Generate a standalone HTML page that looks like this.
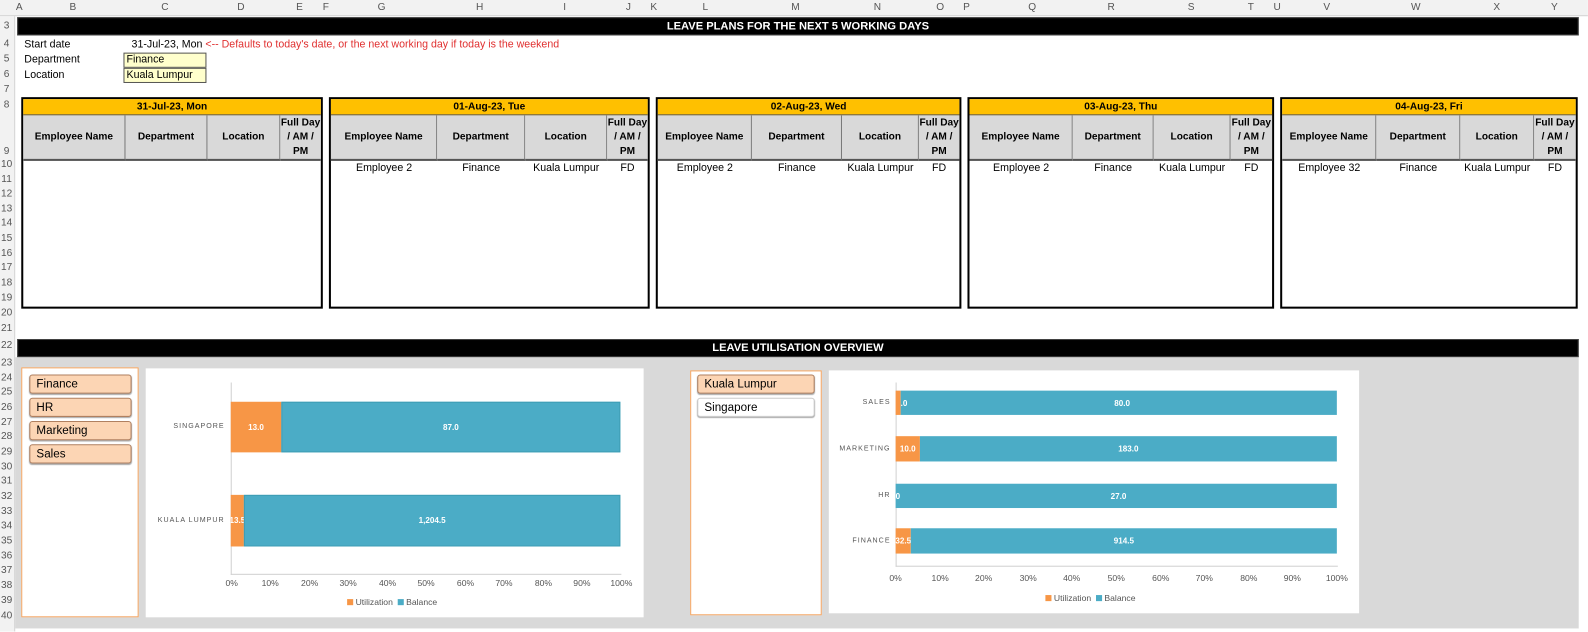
<!DOCTYPE html>
<html><head><meta charset="utf-8"><style>
*{box-sizing:border-box;margin:0;padding:0}
body{width:1588px;height:631px;overflow:hidden;background:#fff;font-family:"Liberation Sans",sans-serif;font-size:10.5px;color:#000}
#w{position:absolute;left:0;top:0;width:1569px;height:624px;transform:scale(1.012);transform-origin:0 0}
.a{position:absolute}
.colh{left:0;top:0;width:1569px;height:16px;background:#f2f2f2;border-bottom:1px solid #d4d4d4}
.colh span{position:absolute;top:2px;color:#555;font-size:10px;transform:translateX(-50%)}
.rowh{left:0;top:16px;width:15px;height:608px;background:#f2f2f2;border-right:1px solid #d4d4d4}
.rowh span{position:absolute;left:0;width:13px;text-align:center;color:#555;font-size:10px}
.bar{background:#000;color:#fff;font-weight:bold;text-align:center;font-size:11px;border:1px solid #444}
.tb{border:2px solid #000;background:#fff}
.yh{position:absolute;left:0;right:0;top:0;height:16px;background:#ffc000;border-bottom:1px solid #555;text-align:center;font-weight:bold;font-size:10px;line-height:15px}
.gh{position:absolute;top:16px;height:45px;background:#d9d9d9;border-right:1px solid #777;border-bottom:2px solid #555;font-weight:bold;font-size:10px;display:flex;align-items:center;justify-content:center;text-align:center;line-height:14px}
.dr{position:absolute;top:62px;text-align:center;font-size:10.5px}
.btn{position:absolute;height:19px;background:#fcd5b4;border:1px solid #b08060;border-radius:3px;font-size:11.5px;padding-left:6px;line-height:18px;box-shadow:0 1px 1px #aaa}
.tick{position:absolute;font-size:8.5px;color:#555;transform:translateX(-50%)}
.cat{position:absolute;font-size:7px;color:#555;letter-spacing:1px;text-align:right}
.v{position:absolute;color:#fff;font-size:8px;font-weight:bold;display:flex;align-items:center;justify-content:center;overflow:hidden}
</style></head><body><div id="w">
<div class="a colh">
<span style="left:19px">A</span><span style="left:72px">B</span><span style="left:163px">C</span><span style="left:238px">D</span><span style="left:296px">E</span><span style="left:322px">F</span><span style="left:377px">G</span><span style="left:474px">H</span><span style="left:558px">I</span><span style="left:621px">J</span><span style="left:646px">K</span><span style="left:697px">L</span><span style="left:786px">M</span><span style="left:867px">N</span><span style="left:929px">O</span><span style="left:955px">P</span><span style="left:1020px">Q</span><span style="left:1098px">R</span><span style="left:1177px">S</span><span style="left:1236px">T</span><span style="left:1262px">U</span><span style="left:1311px">V</span><span style="left:1399px">W</span><span style="left:1479px">X</span><span style="left:1536px">Y</span>
</div>
<div class="a rowh">
<span style="top:4px">3</span><span style="top:22px">4</span><span style="top:37px">5</span><span style="top:52px">6</span><span style="top:67px">7</span><span style="top:82px">8</span><span style="top:128px">9</span><span style="top:141px">10</span><span style="top:156px">11</span><span style="top:170px">12</span><span style="top:185px">13</span><span style="top:199px">14</span><span style="top:214px">15</span><span style="top:229px">16</span><span style="top:243px">17</span><span style="top:258px">18</span><span style="top:273px">19</span><span style="top:288px">20</span><span style="top:303px">21</span><span style="top:320px">22</span><span style="top:337px">23</span><span style="top:352px">24</span><span style="top:366px">25</span><span style="top:381px">26</span><span style="top:396px">27</span><span style="top:410px">28</span><span style="top:425px">29</span><span style="top:440px">30</span><span style="top:454px">31</span><span style="top:469px">32</span><span style="top:484px">33</span><span style="top:498px">34</span><span style="top:513px">35</span><span style="top:528px">36</span><span style="top:542px">37</span><span style="top:557px">38</span><span style="top:572px">39</span><span style="top:587px">40</span>
</div>
<div class="a bar" style="left:17px;top:17px;width:1543px;height:18px;line-height:16px">LEAVE PLANS FOR THE NEXT 5 WORKING DAYS</div>
<div class="a" style="left:24px;top:38px">Start date</div>
<div class="a" style="left:24px;top:53px">Department</div>
<div class="a" style="left:24px;top:68px">Location</div>
<div class="a" style="left:130px;top:38px">31-Jul-23, Mon <span style="color:#e03030">&lt;-- Defaults to today's date, or the next working day if today is the weekend</span></div>
<div class="a" style="left:122px;top:52px;width:82px;height:15px;background:#ffffcc;border:1px solid #555;padding-left:2px;line-height:13px">Finance</div>
<div class="a" style="left:122px;top:67px;width:82px;height:15px;background:#ffffcc;border:1px solid #555;padding-left:2px;line-height:13px">Kuala Lumpur</div>

<div class="a tb" style="left:21px;top:96px;width:298px;height:209px"><div class="yh">31-Jul-23, Mon</div>
<div class="gh" style="left:0;width:101px">Employee Name</div><div class="gh" style="left:101px;width:81px">Department</div><div class="gh" style="left:182px;width:72px">Location</div><div class="gh" style="left:254px;width:40px;border-right:0">Full Day / AM / PM</div></div>

<div class="a tb" style="left:325px;top:96px;width:317px;height:209px"><div class="yh">01-Aug-23, Tue</div>
<div class="gh" style="left:0;width:105px">Employee Name</div><div class="gh" style="left:105px;width:87px">Department</div><div class="gh" style="left:192px;width:81px">Location</div><div class="gh" style="left:273px;width:40px;border-right:0">Full Day / AM / PM</div>
<div class="dr" style="left:0;width:105px">Employee 2</div><div class="dr" style="left:105px;width:87px">Finance</div><div class="dr" style="left:192px;width:81px">Kuala Lumpur</div><div class="dr" style="left:273px;width:40px">FD</div></div>

<div class="a tb" style="left:648px;top:96px;width:302px;height:209px"><div class="yh">02-Aug-23, Wed</div>
<div class="gh" style="left:0;width:93px">Employee Name</div><div class="gh" style="left:93px;width:89px">Department</div><div class="gh" style="left:182px;width:76px">Location</div><div class="gh" style="left:258px;width:40px;border-right:0">Full Day / AM / PM</div>
<div class="dr" style="left:0;width:93px">Employee 2</div><div class="dr" style="left:93px;width:89px">Finance</div><div class="dr" style="left:182px;width:76px">Kuala Lumpur</div><div class="dr" style="left:258px;width:40px">FD</div></div>

<div class="a tb" style="left:956px;top:96px;width:303px;height:209px"><div class="yh">03-Aug-23, Thu</div>
<div class="gh" style="left:0;width:102px">Employee Name</div><div class="gh" style="left:102px;width:80px">Department</div><div class="gh" style="left:182px;width:76px">Location</div><div class="gh" style="left:258px;width:41px;border-right:0">Full Day / AM / PM</div>
<div class="dr" style="left:0;width:102px">Employee 2</div><div class="dr" style="left:102px;width:80px">Finance</div><div class="dr" style="left:182px;width:76px">Kuala Lumpur</div><div class="dr" style="left:258px;width:41px">FD</div></div>

<div class="a tb" style="left:1265px;top:96px;width:294px;height:209px"><div class="yh">04-Aug-23, Fri</div>
<div class="gh" style="left:0;width:93px">Employee Name</div><div class="gh" style="left:93px;width:83px">Department</div><div class="gh" style="left:176px;width:73px">Location</div><div class="gh" style="left:249px;width:41px;border-right:0">Full Day / AM / PM</div>
<div class="dr" style="left:0;width:93px">Employee 32</div><div class="dr" style="left:93px;width:83px">Finance</div><div class="dr" style="left:176px;width:73px">Kuala Lumpur</div><div class="dr" style="left:249px;width:41px">FD</div></div>

<div class="a bar" style="left:17px;top:335px;width:1543px;height:18px;line-height:16px">LEAVE UTILISATION OVERVIEW</div>
<div class="a" style="left:15px;top:353px;width:1545px;height:268px;background:#d9d9d9"></div>

<div class="a" style="left:21px;top:363px;width:116px;height:247px;background:#fff;border:1px solid #f4a460"></div>
<div class="btn" style="left:29px;top:370px;width:101px">Finance</div>
<div class="btn" style="left:29px;top:393px;width:101px">HR</div>
<div class="btn" style="left:29px;top:416px;width:101px">Marketing</div>
<div class="btn" style="left:29px;top:439px;width:101px">Sales</div>

<div class="a" style="left:144px;top:364px;width:492px;height:246px;background:#fff"></div>
<div class="a" style="left:228px;top:378px;width:1px;height:190px;background:#d0d0d0"></div>
<div class="a" style="left:228px;top:567px;width:386px;height:1px;background:#d0d0d0"></div>
<div class="cat" style="left:140px;width:82px;top:418px">SINGAPORE</div>
<div class="cat" style="left:130px;width:92px;top:511px">KUALA LUMPUR</div>
<div class="v" style="left:228px;top:397px;width:50px;height:50px;background:#f79646">13.0</div>
<div class="v" style="left:278px;top:397px;width:335px;height:50px;background:#4bacc6;border:1px solid #3d9db5">87.0</div>
<div class="v" style="left:228px;top:489px;width:13px;height:51px;background:#f79646">13.5</div>
<div class="v" style="left:241px;top:489px;width:372px;height:51px;background:#4bacc6;border:1px solid #3d9db5">1,204.5</div>
<div class="tick" style="left:229px;top:571px">0%</div><div class="tick" style="left:267px;top:571px">10%</div><div class="tick" style="left:306px;top:571px">20%</div><div class="tick" style="left:344px;top:571px">30%</div><div class="tick" style="left:383px;top:571px">40%</div><div class="tick" style="left:421px;top:571px">50%</div><div class="tick" style="left:460px;top:571px">60%</div><div class="tick" style="left:498px;top:571px">70%</div><div class="tick" style="left:537px;top:571px">80%</div><div class="tick" style="left:575px;top:571px">90%</div><div class="tick" style="left:614px;top:571px">100%</div>
<div class="a" style="left:343px;top:590px;font-size:8.5px;color:#555"><span style="display:inline-block;width:6px;height:6px;background:#f79646"></span> Utilization &nbsp;<span style="display:inline-block;width:6px;height:6px;background:#4bacc6"></span> Balance</div>

<div class="a" style="left:682px;top:366px;width:130px;height:242px;background:#fff;border:1px solid #f4a460"></div>
<div class="btn" style="left:689px;top:370px;width:116px">Kuala Lumpur</div>
<div class="btn" style="left:689px;top:393px;width:116px;background:#fff;border-color:#ccc">Singapore</div>

<div class="a" style="left:819px;top:366px;width:524px;height:240px;background:#fff"></div>
<div class="a" style="left:885px;top:378px;width:1px;height:182px;background:#d0d0d0"></div>
<div class="a" style="left:885px;top:559px;width:437px;height:1px;background:#d0d0d0"></div>
<div class="cat" style="left:800px;width:80px;top:394px">SALES</div>
<div class="cat" style="left:800px;width:80px;top:440px">MARKETING</div>
<div class="cat" style="left:800px;width:80px;top:486px">HR</div>
<div class="cat" style="left:800px;width:80px;top:531px">FINANCE</div>
<div class="v" style="left:885px;top:386px;width:5px;height:24px;background:#f79646"></div>
<div class="v" style="left:890px;top:386px;width:431px;height:24px;background:#4bacc6;justify-content:space-between"><span>.0</span><span>80.0</span><span></span></div>
<div class="v" style="left:885px;top:431px;width:24px;height:25px;background:#f79646">10.0</div>
<div class="v" style="left:909px;top:431px;width:412px;height:25px;background:#4bacc6">183.0</div>
<div class="v" style="left:885px;top:478px;width:436px;height:24px;background:#4bacc6;justify-content:space-between"><span>0</span><span>27.0</span><span></span></div>
<div class="v" style="left:885px;top:522px;width:15px;height:25px;background:#f79646">32.5</div>
<div class="v" style="left:900px;top:522px;width:421px;height:25px;background:#4bacc6">914.5</div>
<div class="tick" style="left:885px;top:566px">0%</div><div class="tick" style="left:929px;top:566px">10%</div><div class="tick" style="left:972px;top:566px">20%</div><div class="tick" style="left:1016px;top:566px">30%</div><div class="tick" style="left:1059px;top:566px">40%</div><div class="tick" style="left:1103px;top:566px">50%</div><div class="tick" style="left:1147px;top:566px">60%</div><div class="tick" style="left:1190px;top:566px">70%</div><div class="tick" style="left:1234px;top:566px">80%</div><div class="tick" style="left:1277px;top:566px">90%</div><div class="tick" style="left:1321px;top:566px">100%</div>
<div class="a" style="left:1033px;top:586px;font-size:8.5px;color:#555"><span style="display:inline-block;width:6px;height:6px;background:#f79646"></span> Utilization &nbsp;<span style="display:inline-block;width:6px;height:6px;background:#4bacc6"></span> Balance</div>
</div></body></html>
